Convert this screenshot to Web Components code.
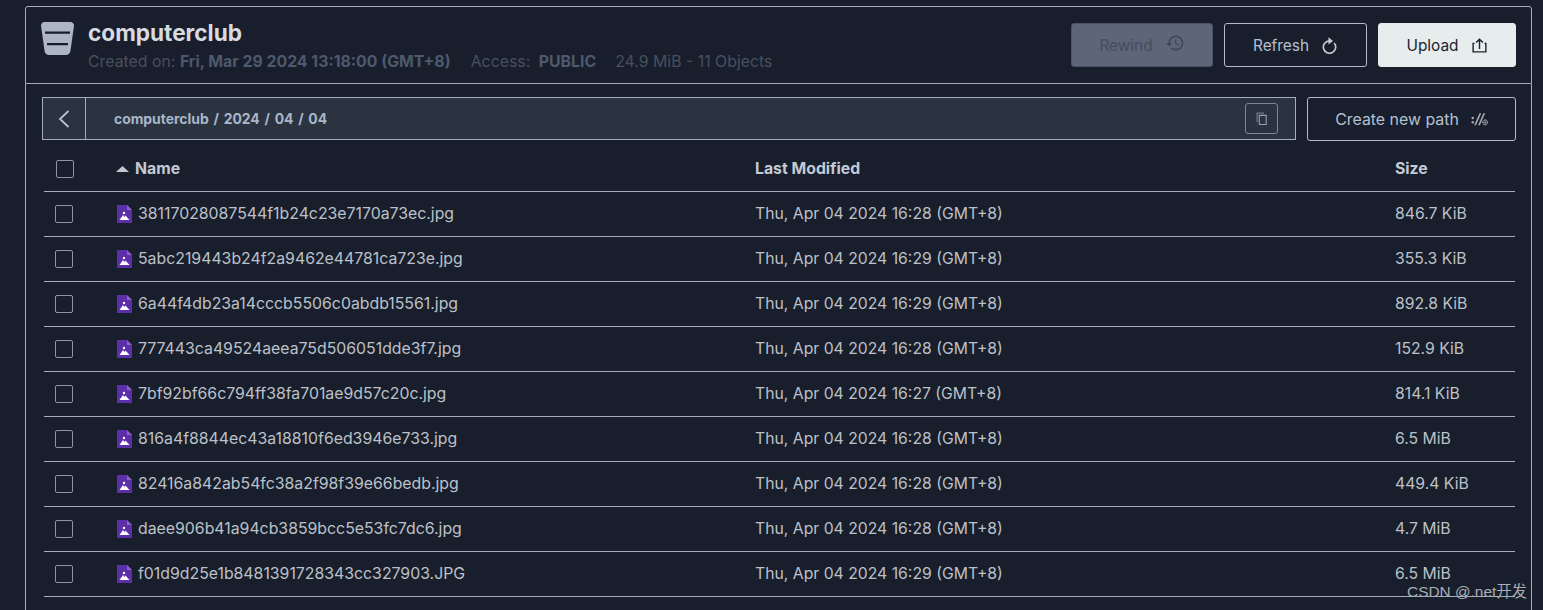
<!DOCTYPE html>
<html>
<head>
<meta charset="utf-8">
<title>computerclub</title>
<style>
  html, body { margin: 0; height: 100%; overflow: hidden; background: #181e2b; }
  body { font-family: Inter, "Liberation Sans", "Noto Sans CJK SC", sans-serif; }
</style>
</head>
<body>
<bucket-page>
  <bucket-header name="computerclub" created="Fri, Mar 29 2024 13:18:00 (GMT+8)" access="PUBLIC" usage="24.9 MiB - 11 Objects">
    <ui-button variant="disabled" icon="rewind" width="142">Rewind</ui-button>
    <ui-button variant="outline" icon="refresh" width="143">Refresh</ui-button>
    <ui-button variant="primary" icon="upload" width="138">Upload</ui-button>
  </bucket-header>
  <bucket-body>
    <path-bar slot="toolbar" path="computerclub / 2024 / 04 / 04"></path-bar>
    <ui-button slot="toolbar" variant="outline" icon="path" width="209" height="44">Create new path</ui-button>
    <table-head></table-head>
    <object-row name="38117028087544f1b24c23e7170a73ec.jpg" modified="Thu, Apr 04 2024 16:28 (GMT+8)" size="846.7 KiB"></object-row>
    <object-row name="5abc219443b24f2a9462e44781ca723e.jpg" modified="Thu, Apr 04 2024 16:29 (GMT+8)" size="355.3 KiB"></object-row>
    <object-row name="6a44f4db23a14cccb5506c0abdb15561.jpg" modified="Thu, Apr 04 2024 16:29 (GMT+8)" size="892.8 KiB"></object-row>
    <object-row name="777443ca49524aeea75d506051dde3f7.jpg" modified="Thu, Apr 04 2024 16:28 (GMT+8)" size="152.9 KiB"></object-row>
    <object-row name="7bf92bf66c794ff38fa701ae9d57c20c.jpg" modified="Thu, Apr 04 2024 16:27 (GMT+8)" size="814.1 KiB"></object-row>
    <object-row name="816a4f8844ec43a18810f6ed3946e733.jpg" modified="Thu, Apr 04 2024 16:28 (GMT+8)" size="6.5 MiB"></object-row>
    <object-row name="82416a842ab54fc38a2f98f39e66bedb.jpg" modified="Thu, Apr 04 2024 16:28 (GMT+8)" size="449.4 KiB"></object-row>
    <object-row name="daee906b41a94cb3859bcc5e53fc7dc6.jpg" modified="Thu, Apr 04 2024 16:28 (GMT+8)" size="4.7 MiB"></object-row>
    <object-row name="f01d9d25e1b8481391728343cc327903.JPG" modified="Thu, Apr 04 2024 16:29 (GMT+8)" size="6.5 MiB"></object-row>
  </bucket-body>
</bucket-page>
<water-mark>CSDN @.net开发</water-mark>

<script>
// icons, all drawn on a 24 box
const ICONS = {
  rewind: '<path fill="currentColor" d="M13 3a9 9 0 0 0-9 9H1l3.900 3.900.1.1L9 12H6a7 7 0 1 1 2.050 4.950l-1.420 1.420A9 9 0 1 0 13 3zm-1 5v5l4.250 2.520.77-1.280-3.520-2.090V8z"/>',
  refresh: '<path fill="none" stroke="currentColor" stroke-width="2.300" d="M12 5.500a8.700 8.700 0 1 0 6.500 2.900"/><path fill="currentColor" d="M10.500 0.500l6.500 5-6.500 5z"/>',
  upload: '<path fill="currentColor" d="M11 5.500L7.900 8.600 6.500 7.200 12 1.600l5.500 5.600-1.400 1.400L13 5.500V17h-2z"/><path fill="currentColor" d="M2 8h3v2H4v10h16V10h-1V8h3v14H2z"/>',
  path: '<g fill="currentColor"><circle cx="2.500" cy="10" r="1.800"/><circle cx="2.500" cy="16" r="1.800"/><path d="M4.500 20L12 3h2.500L7 20zM10 20L17.500 3h2.500L12.500 20z"/></g><g fill="none" stroke="currentColor" stroke-width="1"><circle cx="20" cy="16" r="3.500"/><path d="M20 11.500v9M15.500 16h9"/></g>',
  copy: '<path fill="none" stroke="#9aa3b1" stroke-width="1.700" d="M8.500 7h11v14.500h-11z"/><path fill="none" stroke="currentColor" stroke-width="2" d="M5 18V3.500h11"/>'
};

function define(name, css, html) {
  customElements.define(name, class extends HTMLElement {
    constructor() {
      super();
      this.attachShadow({ mode: 'open' });
    }
    connectedCallback() {
      this.shadowRoot.innerHTML = `<style>${css}</style>${html(this)}`;
    }
  });
}

const attr = (el, key, fallback = '') => el.getAttribute(key) || fallback;

define('bucket-page', `
  :host { display: block; padding: 6px 11px 0 25px; color: #c8cdd6; }
`, () => `<slot></slot>`);

define('bucket-header', `
  :host { display: flex; align-items: center; justify-content: space-between; box-sizing: border-box; height: 78px;
    border: 1px solid #a4adba; border-radius: 3px 3px 0 0; padding: 0 15px 0 15px; }
  .info { display: flex; align-items: flex-start; gap: 14px; }
  svg { width: 33px; height: 33px; margin-top: 3px; color: #aeb6c5; flex: none; }
  h1 { margin: 0; font-size: 22.600px; line-height: 28px; font-weight: 700; color: #d7dbe0; }
  .meta { display: flex; gap: 20px; font-size: 15.850px; line-height: 20px; color: #47505f; white-space: nowrap; margin-top: 5px; }
  .meta b { font-weight: 700; color: #4d596c; }
  .meta span + span b { margin-left: 4px; }
  .meta span:last-child { margin-left: -1px; }
  .actions { display: flex; gap: 11px; }
`, el => `
  <div class="info">
    <svg viewBox="0 0 33 33">
      <path fill="currentColor" d="M3.500 0h26A3.500 3.500 0 0 1 33 3.800L29.500 28.500A5 5 0 0 1 24.500 33h-16a5 5 0 0 1-5-4.500L0 3.800A3.500 3.500 0 0 1 3.500 0z"/>
      <path fill="#181e2b" d="M4 9.500h25v2.200H4zM6 21h21v2.200H6z"/>
    </svg>
    <div>
      <h1>${attr(el, 'name')}</h1>
      <div class="meta">
        <span>Created on: <b>${attr(el, 'created')}</b></span>
        <span>Access: <b>${attr(el, 'access')}</b></span>
        <span>${attr(el, 'usage')}</span>
      </div>
    </div>
  </div>
  <div class="actions"><slot></slot></div>`);

define('ui-button', `
  :host { display: inline-flex; align-items: center; justify-content: center; gap: 12px; box-sizing: border-box;
    border-radius: 3px; font-size: 15.400px; white-space: nowrap; border: 1px solid #b3bccb; color: #b4c0d2; }
  :host([icon="path"]) { font-size: 15.900px; }
  :host([variant="disabled"]) { background: #5d6678; border-color: #4b5363; color: #454d5c; }
  :host([variant="primary"]) { background: #e7ecec; border-color: #e7ecec; color: #1b2330; }
  svg { width: 17px; height: 17px; flex: none; }
  :host([icon="path"]) svg { color: #a0a8b4; }
  :host([variant="disabled"]) svg { color: #3f4756; width: 20px; height: 20px; margin-top: -4px; }
  :host([icon="refresh"]) svg { color: #c5cad2; }
`, el => {
  el.style.width = attr(el, 'width', '140') + 'px';
  el.style.height = attr(el, 'height', '44') + 'px';
  return `<slot></slot><svg viewBox="0 0 24 24">${ICONS[attr(el, 'icon')]}</svg>`;
});

define('bucket-body', `
  :host { display: block; box-sizing: border-box; height: 530px; border: 1px solid #a4adba; border-width: 0 1px;
    padding: 13px 15px 0 16px; }
  .toolbar { display: flex; gap: 11px; height: 44px; }
  .rows { padding-left: 2px; margin-right: 1px; }
`, () => `<div class="toolbar"><slot name="toolbar"></slot></div><div class="rows"><slot></slot></div>`);

define('path-bar', `
  :host { display: flex; flex: 1; box-sizing: border-box; height: 43px; background: #2b3341;
    border: 1px solid #a4adba; align-items: center; }
  .back { display: flex; align-items: center; justify-content: center; box-sizing: border-box; width: 43px; height: 100%;
    border-right: 1px solid #a4adba; color: #bac2cd; }
  .back svg { width: 14px; height: 20px; }
  .path { flex: 1; padding-left: 28px; font-size: 13.900px; font-weight: 700; color: #aab6c8; word-spacing: 1.500px; }
  .copy { display: flex; align-items: center; justify-content: center; box-sizing: border-box; width: 33px; height: 31px;
    border: 1px solid #7d8695; border-radius: 3px; margin-right: 17px; color: #6f7989; }
  .copy svg { width: 15px; height: 15px; }
`, el => `
  <div class="back"><svg viewBox="0 0 14 20"><path fill="none" stroke="currentColor" stroke-width="1.800" d="M11.500 2L3 10l8.500 8"/></svg></div>
  <div class="path">${attr(el, 'path')}</div>
  <div class="copy"><svg viewBox="0 0 24 24">${ICONS.copy}</svg></div>`);

const ROW_CSS = `
  :host { display: grid; grid-template-columns: 73px 638px 640px 1fr; align-items: center; box-sizing: border-box; height: 45px;
    border-bottom: 1px solid #a4adba; font-size: 15.800px; color: #bcc1c9; white-space: nowrap; }
  .box { box-sizing: border-box; width: 18px; height: 18px; border: 1px solid #8d95a3; border-radius: 2px; margin-left: 11px; }
  .name { display: flex; align-items: center; gap: 6px; }
`;

define('table-head', ROW_CSS + `
  :host { height: 51px; font-weight: 700; color: #c3cad6; padding-top: 5px; }
  .box { margin-left: 12px; }
  .name { gap: 6px; margin-left: -1px; }
  svg { width: 13px; height: 6px; }
`, () => `
  <div class="box"></div>
  <div class="name"><svg viewBox="0 0 13 6"><path fill="#c3c8d0" d="M6.500 0L13 6H0z"/></svg><span>Name</span></div>
  <div>Last Modified</div>
  <div>Size</div>`);

define('object-row', ROW_CSS + `
  svg { width: 15px; height: 18px; flex: none; }
  span { font-size: 15.830px; margin-bottom: 2px; }
  .cell { font-size: 15.750px; margin-bottom: 2px; }
`, el => `
  <div class="box"></div>
  <div class="name">
    <svg viewBox="0 0 15 18">
      <path fill="#5c2ea8" d="M0 0h10l5 5v13H0z"/>
      <path fill="#8a63c4" d="M10 0l5 5h-5z"/>
      <path fill="#fff" d="M2.500 15l3.500-5 1.500 2 1-1.500 4 4.500z"/>
      <circle cx="7" cy="8" r="1.200" fill="#fff"/>
    </svg>
    <span>${attr(el, 'name')}</span>
  </div>
  <div class="cell">${attr(el, 'modified')}</div>
  <div class="cell">${attr(el, 'size')}</div>`);

define('water-mark', `
  :host { position: absolute; right: 16px; bottom: 9px; font-size: 15.400px; line-height: 18px; color: #a9adb5;
    font-family: "Liberation Sans", "Noto Sans CJK SC", sans-serif; white-space: nowrap; }
`, () => `<slot></slot>`);
</script>
</body>
</html>
